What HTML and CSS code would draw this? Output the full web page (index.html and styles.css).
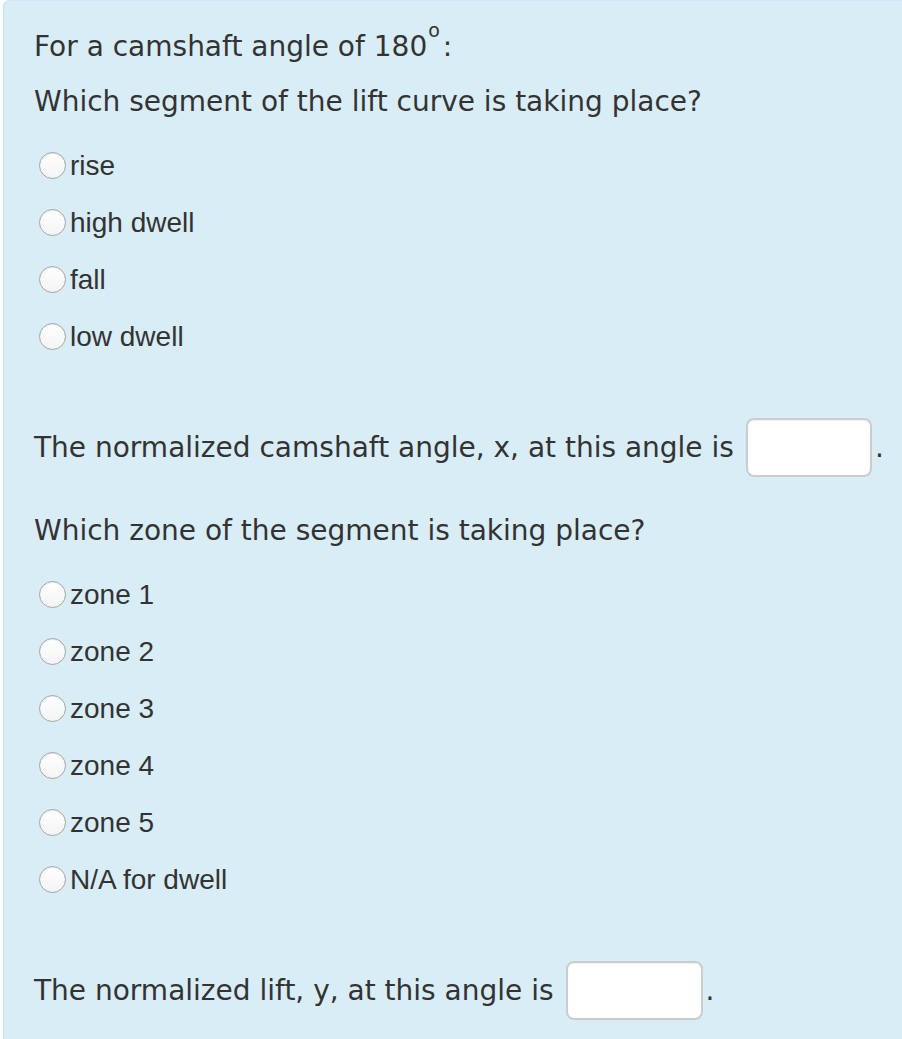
FILE: index.html
```html
<!DOCTYPE html>
<html>
<head>
<meta charset="utf-8">
<link rel="stylesheet" href="styles.css">
</head>
<body>
<div class="panel">
  <p class="q">For a camshaft angle of 180<sup class="deg">o</sup>:</p>
  <p class="q gap">Which segment of the lift curve is taking place?</p>
  <ul class="choices">
    <li><span class="radio"></span><span class="label">rise</span></li>
    <li><span class="radio"></span><span class="label">high dwell</span></li>
    <li><span class="radio"></span><span class="label">fall</span></li>
    <li><span class="radio"></span><span class="label">low dwell</span></li>
  </ul>
  <div class="answer">
    <span class="q">The normalized camshaft angle, x, at this angle is</span>
    <span class="box box-a"></span>
    <span class="dot">.</span>
  </div>
  <p class="q zone-q">Which zone of the segment is taking place?</p>
  <ul class="choices">
    <li><span class="radio"></span><span class="label">zone 1</span></li>
    <li><span class="radio"></span><span class="label">zone 2</span></li>
    <li><span class="radio"></span><span class="label">zone 3</span></li>
    <li><span class="radio"></span><span class="label">zone 4</span></li>
    <li><span class="radio"></span><span class="label">zone 5</span></li>
    <li><span class="radio"></span><span class="label">N/A for dwell</span></li>
  </ul>
  <div class="answer">
    <span class="q">The normalized lift, y, at this angle is</span>
    <span class="box box-b"></span>
    <span class="dot">.</span>
  </div>
</div>
</body>
</html>
```
FILE: styles.css
```css
html, body {
  margin: 0;
  padding: 0;
  background: #ffffff;
}
body {
  width: 902px;
  height: 1039px;
  overflow: hidden;
}
.panel {
  margin-left: 3px;
  height: 1039px;
  background: #d9edf7;
  border-left: 1px solid #bce8f1;
  border-top: 1px solid #cfe9f2;
  border-top-left-radius: 6px;
  padding: 26px 0 0 30px;
  box-sizing: border-box;
  color: #333333;
}
.q {
  font-family: "DejaVu Sans", Verdana, sans-serif;
  font-size: 28px;
  line-height: 40px;
  margin: 0;
  color: #333333;
}
.gap {
  margin-top: 15px;
}
.deg {
  font-size: 19px;
  line-height: 0;
  vertical-align: 19px;
  margin-left: 1px;
  margin-right: 3px;
}
.choices {
  list-style: none;
  margin: 15px 0 0 0;
  padding: 0;
}
.choices li {
  height: 57px;
  display: flex;
  align-items: center;
}
.radio {
  width: 25px;
  height: 25px;
  border-radius: 50%;
  border: 1px solid #a6a6a6;
  background: linear-gradient(#ffffff, #f4f4f4);
  box-shadow: inset 0 1px 1px rgba(0,0,0,0.08);
  margin-left: 5px;
  margin-right: 4px;
  flex: none;
}
.label {
  font-family: "Liberation Sans", Arial, Helvetica, sans-serif;
  font-size: 28px;
  color: #333333;
}
.answer {
  display: flex;
  align-items: center;
  margin-top: 53px;
  height: 59px;
}
.box {
  height: 59px;
  box-sizing: border-box;
  border: 2px solid #cccccc;
  border-radius: 8px;
  background: #ffffff;
  margin-left: 12px;
  box-shadow: inset 0 1px 2px rgba(0,0,0,0.06);
}
.box-a {
  width: 126px;
}
.box-b {
  width: 137px;
}
.dot {
  font-family: "DejaVu Sans", Verdana, sans-serif;
  font-size: 28px;
  margin-left: 3px;
  color: #333333;
}
.zone-q {
  margin-top: 34px;
}
```
